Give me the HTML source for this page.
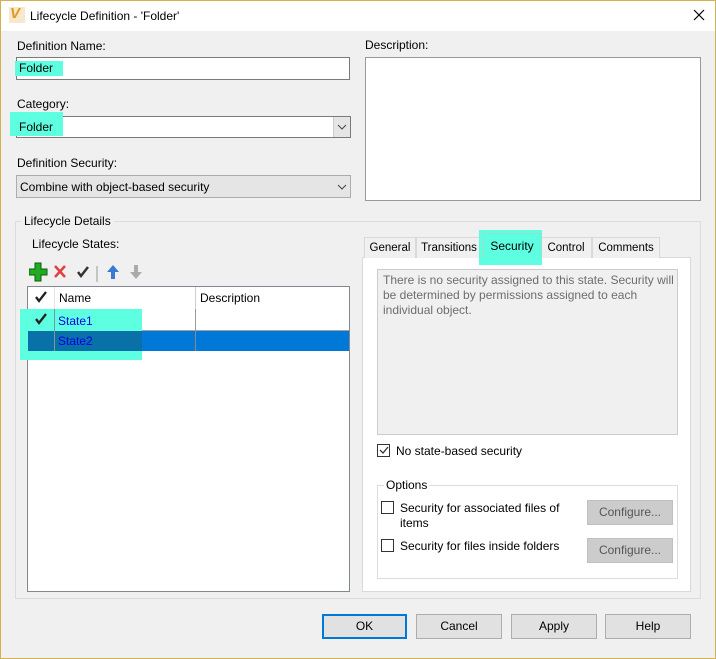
<!DOCTYPE html>
<html><head><style>
*{box-sizing:border-box;margin:0;padding:0}
body{width:716px;height:659px;background:#f0f0f0;font-family:"Liberation Sans",sans-serif;font-size:12px;color:#000;position:relative;overflow:hidden}
.a{position:absolute}
.win{left:0;top:0;width:716px;height:659px;border:1px solid #d4b050}
.title{left:1px;top:1px;width:714px;height:30px;background:#fff}
.inp{background:#fff;border:1px solid #7a7a7a}
.cy{background:#5effe0}
.btn{background:#e1e1e1;border:1px solid #adadad;text-align:center;line-height:22px}
.cfg{background:#cccccc;border:1px solid #c0c0c0;text-align:center;line-height:23px;color:#555}
.cb{width:13px;height:13px;border:1px solid #333;background:#fff}
.tab{top:237px;height:21px;border:1px solid #d9d9d9;border-bottom:none;background:#f0f0f0;text-align:center;line-height:20px;font-size:11.5px;white-space:nowrap}
</style></head><body>
<div class="a win"></div>
<div class="a title"></div>
<div class="a" style="left:9px;top:7px;width:16px;height:16px;background:#f6e8cc"></div>
<div class="a" style="left:10px;top:5px;font-weight:bold;color:#e09a20;font-size:15px;font-style:italic">V</div>
<div class="a" style="left:30px;top:9px">Lifecycle Definition - 'Folder'</div>
<svg class="a" style="left:693px;top:9px" width="12" height="12"><path d="M1 1L11 11M11 1L1 11" stroke="#000" stroke-width="1.2"/></svg>

<div class="a" style="left:17px;top:39px">Definition Name:</div>
<div class="a inp" style="left:16px;top:57px;width:334px;height:23px"></div>
<div class="a cy" style="left:15px;top:61px;width:48px;height:15px"></div>
<div class="a" style="left:19px;top:61px">Folder</div>

<div class="a" style="left:17px;top:97px">Category:</div>
<div class="a inp" style="left:16px;top:116px;width:335px;height:22px"></div>
<div class="a" style="left:333px;top:117px;width:17px;height:20px;background:#e5e5e5;border-left:1px solid #ccc"></div>
<svg class="a" style="left:337px;top:124px" width="10" height="6"><path d="M1 1L5 5L9 1" stroke="#444" fill="none"/></svg>
<div class="a cy" style="left:10px;top:112px;width:53px;height:24px"></div>
<div class="a" style="left:19px;top:120px">Folder</div>

<div class="a" style="left:17px;top:156px">Definition Security:</div>
<div class="a" style="left:16px;top:175px;width:335px;height:23px;background:#e5e5e5;border:1px solid #acacac"></div>
<div class="a" style="left:20px;top:180px">Combine with object-based security</div>
<svg class="a" style="left:337px;top:184px" width="10" height="6"><path d="M1 1L5 5L9 1" stroke="#444" fill="none"/></svg>

<div class="a" style="left:365px;top:38px">Description:</div>
<div class="a inp" style="left:365px;top:57px;width:336px;height:144px;border-color:#999"></div>

<div class="a" style="left:15px;top:221px;width:686px;height:378px;border:1px solid #dcdcdc"></div>
<div class="a" style="left:21px;top:214px;background:#f0f0f0;padding:0 3px">Lifecycle Details</div>
<div class="a" style="left:32px;top:237px">Lifecycle States:</div>

<svg class="a" style="left:29px;top:262px" width="120" height="20">
<path d="M6 1h6v6h6v6h-6v6h-6v-6h-6v-6h6z" fill="#22aa22" stroke="#0a600a"/>
<path d="M26 4l10 11M36 4l-10 11" stroke="#e04040" stroke-width="2.5"/>
<path d="M49 10l3 4l7-9" stroke="#333" stroke-width="2.5" fill="none"/>
<path d="M68 4v16" stroke="#999"/>
<path d="M84 3l-6 7h4v7h4v-7h4z" fill="#3a7ad0"/>
<path d="M107 17l-6-7h4v-7h4v7h4z" fill="#aaa"/>
</svg>

<div class="a" style="left:27px;top:286px;width:323px;height:306px;background:#fff;border:1px solid #828790"></div>
<div class="a" style="left:54px;top:287px;width:1px;height:64px;background:#e5e5e5"></div>
<div class="a" style="left:195px;top:287px;width:1px;height:64px;background:#d0d0d0"></div>
<div class="a" style="left:28px;top:330px;width:321px;height:1px;background:#a0a0a0"></div>
<div class="a" style="left:28px;top:331px;width:321px;height:20px;background:#0078d7"></div>
<div class="a" style="left:20px;top:309px;width:122px;height:22px;background:#5effe0"></div>
<div class="a" style="left:20px;top:331px;width:8px;height:29px;background:#5effe0"></div>
<div class="a" style="left:28px;top:351px;width:114px;height:9px;background:#5effe0"></div>
<div class="a" style="left:28px;top:331px;width:114px;height:20px;background:#0a70a8"></div>
<div class="a" style="left:54px;top:309px;width:1px;height:42px;background:#7a9a9a"></div>
<div class="a" style="left:195px;top:331px;width:1px;height:20px;background:#888"></div>
<div class="a" style="left:195px;top:309px;width:1px;height:22px;background:#999"></div>
<svg class="a" style="left:34px;top:291px" width="14" height="12"><path d="M2 6l3 4l7-9" stroke="#222" stroke-width="2.3" fill="none"/></svg>
<svg class="a" style="left:34px;top:313px" width="14" height="12"><path d="M2 6l3 4l7-9" stroke="#222" stroke-width="2.3" fill="none"/></svg>
<div class="a" style="left:59px;top:291px">Name</div>
<div class="a" style="left:200px;top:291px">Description</div>
<div class="a" style="left:58px;top:314px;color:#0000ee">State1</div>
<div class="a" style="left:58px;top:334px;color:#0000ee">State2</div>

<div class="a" style="left:362px;top:257px;width:329px;height:335px;background:#fff;border:1px solid #d9d9d9"></div>
<div class="a tab" style="left:364px;width:52px">General</div>
<div class="a tab" style="left:416px;width:66px">Transitions</div>
<div class="a tab" style="left:540px;width:52px">Control</div>
<div class="a tab" style="left:592px;width:68px">Comments</div>
<div class="a cy" style="left:479px;top:230px;width:63px;height:35px"></div>
<div class="a" style="left:483px;top:233px;width:58px;height:25px;border:1px solid #9adcd0;border-bottom:none;text-align:center;line-height:24px">Security</div>

<div class="a" style="left:377px;top:269px;width:301px;height:166px;background:#f0f0f0;border:1px solid #ccc"></div>
<div class="a" style="left:383px;top:273px;width:292px;color:#6d6d6d;line-height:15px">There is no security assigned to this state. Security will be determined by permissions assigned to each individual object.</div>

<div class="a cb" style="left:377px;top:444px"></div>
<svg class="a" style="left:378px;top:445px" width="11" height="11"><path d="M2 5l3 3l5-6" stroke="#333" stroke-width="1.3" fill="none"/></svg>
<div class="a" style="left:396px;top:444px">No state-based security</div>

<div class="a" style="left:377px;top:485px;width:301px;height:94px;border:1px solid #dcdcdc"></div>
<div class="a" style="left:384px;top:478px;background:#fff;padding:0 2px">Options</div>
<div class="a cb" style="left:381px;top:501px"></div>
<div class="a" style="left:400px;top:501px;line-height:15px;width:180px">Security for associated files of items</div>
<div class="a cb" style="left:381px;top:539px"></div>
<div class="a" style="left:400px;top:539px">Security for files inside folders</div>
<div class="a cfg" style="left:587px;top:500px;width:86px;height:25px">Configure...</div>
<div class="a cfg" style="left:587px;top:538px;width:86px;height:25px">Configure...</div>

<div class="a btn" style="left:322px;top:614px;width:85px;height:25px;border:2px solid #0078d7;line-height:21px">OK</div>
<div class="a btn" style="left:416px;top:614px;width:86px;height:25px">Cancel</div>
<div class="a btn" style="left:511px;top:614px;width:86px;height:25px">Apply</div>
<div class="a btn" style="left:605px;top:614px;width:86px;height:25px">Help</div>
</body></html>
